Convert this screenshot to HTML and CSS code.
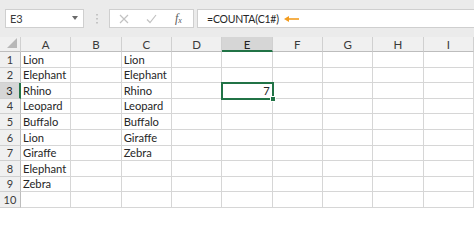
FILE: index.html
```html
<!DOCTYPE html>
<html>
<head>
<meta charset="utf-8">
<link rel="stylesheet" href="styles.css">
</head>
<body>
<div class="app">
  <div class="formula-bar">
    <div class="name-box">
      <span class="name">E3</span>
      <svg class="caret" width="6" height="4" viewBox="0 0 6 4"><path d="M0 0h6L3 4z" fill="#6a6a6a"/></svg>
    </div>
    <div class="grip">
      <svg width="2" height="10" viewBox="0 0 2 10"><rect x="0" y="0" width="2" height="1.5" fill="#c4c4c4"/><rect x="0" y="4" width="2" height="1.5" fill="#c4c4c4"/><rect x="0" y="8" width="2" height="1.5" fill="#c4c4c4"/></svg>
    </div>
    <div class="fx-buttons">
      <svg class="btn" width="10" height="10" viewBox="0 0 10 10"><path d="M1 1L9 9M9 1L1 9" stroke="#c2c2c2" stroke-width="1.2" fill="none"/></svg>
      <svg class="btn" width="11" height="10" viewBox="0 0 11 10"><path d="M1 5.5L4 8.5L10 1" stroke="#c2c2c2" stroke-width="1.2" fill="none"/></svg>
      <span class="fx">f<sub>x</sub></span>
    </div>
    <div class="formula">
      <span class="formula-text">=COUNTA(C1#)</span>
      <svg class="arrow" width="15" height="6" viewBox="0 0 15 6"><path d="M15 3H3" stroke="#f39c1e" stroke-width="1.6"/><path d="M0 3L5 0V6z" fill="#f39c1e"/></svg>
    </div>
  </div>
  <div class="sheet">
    <div class="h corner"><span class="tri"></span></div>
    <div class="h col">A</div><div class="h col">B</div><div class="h col">C</div><div class="h col">D</div><div class="h col sel-col">E</div><div class="h col">F</div><div class="h col">G</div><div class="h col">H</div><div class="h col">I</div>

    <div class="h row">1</div><div class="c">Lion</div><div class="c"></div><div class="c">Lion</div><div class="c"></div><div class="c"></div><div class="c"></div><div class="c"></div><div class="c"></div><div class="c"></div>
    <div class="h row">2</div><div class="c">Elephant</div><div class="c"></div><div class="c">Elephant</div><div class="c"></div><div class="c"></div><div class="c"></div><div class="c"></div><div class="c"></div><div class="c"></div>
    <div class="h row sel-row">3</div><div class="c">Rhino</div><div class="c"></div><div class="c">Rhino</div><div class="c"></div><div class="c active num">7<span class="handle"></span></div><div class="c"></div><div class="c"></div><div class="c"></div><div class="c"></div>
    <div class="h row">4</div><div class="c">Leopard</div><div class="c"></div><div class="c">Leopard</div><div class="c"></div><div class="c"></div><div class="c"></div><div class="c"></div><div class="c"></div><div class="c"></div>
    <div class="h row">5</div><div class="c">Buffalo</div><div class="c"></div><div class="c">Buffalo</div><div class="c"></div><div class="c"></div><div class="c"></div><div class="c"></div><div class="c"></div><div class="c"></div>
    <div class="h row">6</div><div class="c">Lion</div><div class="c"></div><div class="c">Giraffe</div><div class="c"></div><div class="c"></div><div class="c"></div><div class="c"></div><div class="c"></div><div class="c"></div>
    <div class="h row">7</div><div class="c">Giraffe</div><div class="c"></div><div class="c">Zebra</div><div class="c"></div><div class="c"></div><div class="c"></div><div class="c"></div><div class="c"></div><div class="c"></div>
    <div class="h row">8</div><div class="c">Elephant</div><div class="c"></div><div class="c"></div><div class="c"></div><div class="c"></div><div class="c"></div><div class="c"></div><div class="c"></div><div class="c"></div>
    <div class="h row">9</div><div class="c">Zebra</div><div class="c"></div><div class="c"></div><div class="c"></div><div class="c"></div><div class="c"></div><div class="c"></div><div class="c"></div><div class="c"></div>
    <div class="h row">10</div><div class="c"></div><div class="c"></div><div class="c"></div><div class="c"></div><div class="c"></div><div class="c"></div><div class="c"></div><div class="c"></div><div class="c"></div>
  </div>
</div>
</body>
</html>
```

FILE: styles.css
```css
* { box-sizing: border-box; }
html, body { margin: 0; padding: 0; }
body {
  width: 474px;
  height: 209px;
  overflow: hidden;
  background: #ffffff;
  font-family: "Lato", "Liberation Sans", sans-serif;
  font-size: 11px;
  color: #262626;
}
.app { display: flex; flex-direction: column; }

.formula-bar {
  display: flex;
  align-items: stretch;
  height: 37px;
  padding: 9px 0 9px 5px;
  background: #ebebeb;
}
.name-box {
  width: 79px;
  background: #fff;
  border: 1px solid #cfcfcf;
  display: flex;
  align-items: center;
  justify-content: space-between;
  padding: 0 5px 0 4px;
}
.name { color: #3a3a3a; font-size: 11px; }
.caret { display: block; margin-bottom: 1px; }
.grip {
  width: 25px;
  display: flex;
  align-items: center;
  justify-content: center;
}
.grip svg { display: block; }
.fx-buttons {
  width: 85px;
  background: #fff;
  border: 1px solid #cfcfcf;
  display: flex;
  align-items: center;
  padding: 0 0 0 9px;
  gap: 17px;
}
.btn { display: block; }
.fx {
  font-family: "Liberation Serif", serif;
  font-style: italic;
  font-size: 12px;
  color: #5a5a5a;
  margin-left: 1px;
}
.fx sub { font-size: 8px; vertical-align: -1px; }
.formula {
  flex: 1;
  margin-left: 3px;
  background: #fff;
  border: 1px solid #cfcfcf;
  border-right: none;
  display: flex;
  align-items: center;
  padding-left: 9px;
}
.formula-text { color: #262626; font-size: 10.5px; letter-spacing: -0.2px; }
.arrow { display: block; margin-left: 5px; }

.sheet {
  display: grid;
  grid-template-columns: 21px repeat(9, 1fr);
  grid-template-rows: 15px repeat(10, 15.6px);
  background: #fff;
}
.h {
  background: #f0f0f0;
  color: #3a3a3a;
  font-size: 11.5px;
  display: flex;
  align-items: center;
  justify-content: center;
  border-right: 1px solid #d0d0d0;
  border-bottom: 1px solid #d0d0d0;
}
.corner { position: relative; border-bottom: 1px solid #bdbdbd; }
.tri {
  position: absolute;
  right: 3px;
  bottom: 3px;
  width: 0;
  height: 0;
  border-left: 10px solid transparent;
  border-bottom: 10px solid #b8b8b8;
}
.col { border-bottom: 1px solid #bdbdbd; padding-top: 1px; }
.row { border-right: 1px solid #bdbdbd; align-items: flex-end; padding-bottom: 1px; font-size: 11px; }
.sel-col {
  background: #d6d6d6;
  border-bottom: 2px solid #217346;
  color: #222;
}
.sel-row {
  background: #d6d6d6;
  border-right: 2px solid #217346;
  color: #222;
}
.c {
  border-right: 1px solid #d6d6d6;
  border-bottom: 1px solid #d6d6d6;
  padding: 0 2px 1px 2px;
  display: flex;
  align-items: flex-end;
  white-space: nowrap;
  color: #262626;
  font-size: 11.2px;
  line-height: 13px;
}
.num { justify-content: flex-end; }
.active {
  position: relative;
  outline: 2px solid #217346;
  outline-offset: -1px;
  z-index: 1;
}
.handle {
  position: absolute;
  right: -4px;
  bottom: -4px;
  width: 6px;
  height: 6px;
  background: #217346;
  border: 1px solid #fff;
}
```
